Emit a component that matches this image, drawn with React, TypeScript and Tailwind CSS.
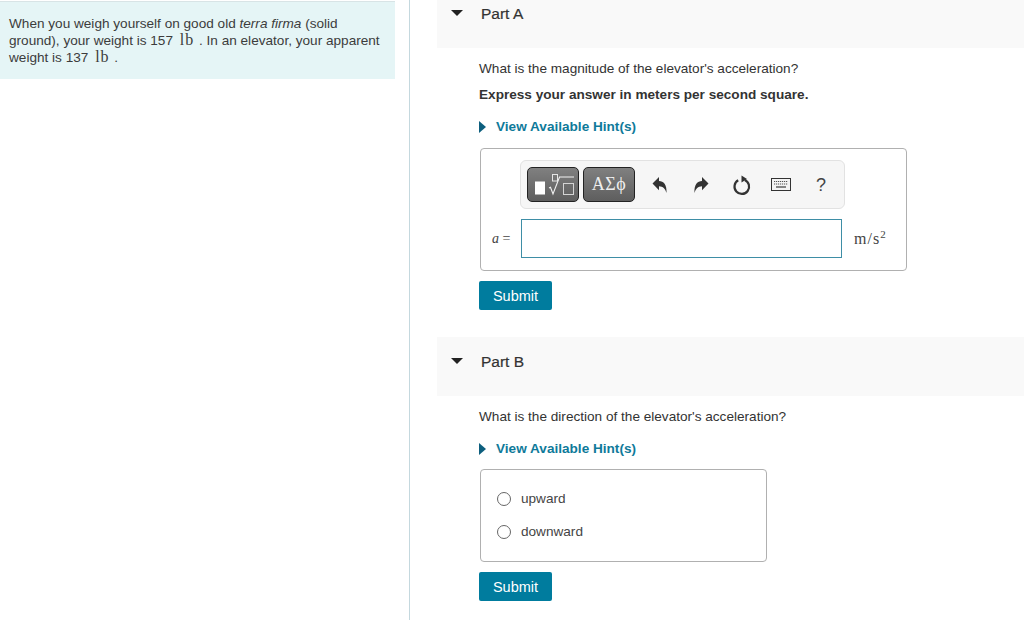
import React from 'react';

const sans = "font-['Liberation_Sans',Arial,sans-serif]";
const serif = "font-['Liberation_Serif','Times_New_Roman',serif]";

const PartHeader = ({ title, className }: { title: string; className: string }) => (
  <div className={`flex items-start bg-[#f9f9f9] pl-[14px] ${className}`}>
    <span className="mt-[10px] h-0 w-0 border-x-[6px] border-t-[6px] border-x-transparent border-t-[#222]" />
    <span className="ml-[18px] mt-[5px] text-[15.5px] leading-[18px] text-[#333] [-webkit-text-stroke:0.2px_#333]">{title}</span>
  </div>
);

const HintLink = () => (
  <div className="flex items-center">
    <span className="h-0 w-0 border-y-[6px] border-l-[7px] border-y-transparent border-l-[#0d5f7e]" />
    <span className="ml-[10px] text-[13.6px] font-bold leading-[18px] text-[#0f7a9a]">View Available Hint(s)</span>
  </div>
);

const SubmitButton = () => (
  <button type="button" className="block h-[29px] w-[73px] rounded-[2px] bg-[#007c9e] pt-px text-center text-[14.5px] leading-[28px] text-white">
    Submit
  </button>
);

const Radio = ({ label }: { label: string }) => (
  <label className="flex h-[33.5px] items-center">
    <span className="h-[14px] w-[14px] rounded-full border border-[#666] bg-white" />
    <span className="ml-[10px] text-[13.6px] leading-[18px] text-[#444]">{label}</span>
  </label>
);

const TemplateIcon = () => (
  <svg width="46" height="28" viewBox="0 0 46 28" fill="none">
    <rect x="5" y="10.5" width="10" height="13" fill="#fff" />
    <rect x="22.5" y="3.5" width="5" height="6.5" stroke="#e5e5e5" strokeWidth="1" />
    <path d="M19 17l1.5-.8L23 23l6.5-17H44" stroke="#f2f2f2" strokeWidth="1.1" />
    <rect x="33.5" y="12.5" width="10" height="11" stroke="#d4d4d4" strokeWidth="1" />
  </svg>
);

const UndoIcon = ({ flip }: { flip?: boolean }) => (
  <svg width="16" height="18" viewBox="0 0 16 18" className={flip ? '-scale-x-100' : ''}>
    <path d="M0.5 7.5L7 1v4c4.5.3 8 3.200 7.500 12C13.200 12.500 11 10.500 7 10.300V14.300z" fill="#333" />
  </svg>
);

const ResetIcon = () => (
  <svg width="20" height="22" viewBox="0 0 20 22" fill="none">
    <path d="M6.200 6.300A7.300 7.300 0 1 0 12.800 6" stroke="#333" strokeWidth="2.200" />
    <path d="M9.500 1.500L15 5L9.500 8.500z" fill="#333" />
  </svg>
);

const KeyboardIcon = () => (
  <svg width="20" height="13" viewBox="0 0 20 13" fill="none">
    <rect x="0.500" y="0.500" width="19" height="12" fill="#f4f4f4" stroke="#333" />
    <path d="M3 3.500h14M3 6h14" stroke="#555" strokeWidth="1.200" strokeDasharray="1.200 .8" />
    <path d="M5 9h10" stroke="#555" strokeWidth="1.400" />
  </svg>
);

const Toolbar = () => (
  <div className="ml-[39px] flex h-[49px] w-[325px] items-center rounded-[6px] border border-[#e2e2e2] bg-[#f6f6f6] pl-[6px]">
    <span className="flex h-[35px] w-[52px] items-center justify-center rounded-[5px] border border-[#222] bg-gradient-to-b from-[#808080] to-[#5e5e5e]">
      <TemplateIcon />
    </span>
    <span className={`ml-[4px] flex h-[35px] w-[52px] items-center justify-center rounded-[5px] border border-[#222] bg-gradient-to-b from-[#808080] to-[#5e5e5e] text-[18px] tracking-[0.5px] text-[#eee] ${serif}`}>
      ΑΣϕ
    </span>
    <span className="ml-[17px] flex w-[16px] justify-center"><UndoIcon /></span>
    <span className="ml-[25px] flex w-[16px] justify-center"><UndoIcon flip /></span>
    <span className="ml-[23px] flex w-[20px] justify-center"><ResetIcon /></span>
    <span className="ml-[19px] flex w-[20px] justify-center"><KeyboardIcon /></span>
    <span className="ml-[25px] text-[18px] leading-none text-[#444]">?</span>
  </div>
);

export default function App() {
  return (
    <div className={`flex h-[620px] w-[1024px] overflow-hidden bg-white text-[#333] ${sans}`}>
      <aside className="h-full w-[410px] shrink-0 border-r border-[#c4d8de]">
        <div className="mt-px h-[78px] w-[395px] border-t border-[#d8e4e6] bg-[#e5f5f6] pl-[9px] pt-[14px] text-[13.6px] leading-[16.75px] text-[#3c3c3c]">
          When you weigh yourself on good old <em>terra firma</em> (solid
          <br />
          ground), your weight is 157 <span className={`ml-[3px] mr-[1px] text-[16px] leading-[0] tracking-[1px] ${serif}`}>lb</span> . In an elevator, your apparent
          <br />
          weight is 137 <span className={`ml-[3px] mr-[1px] text-[16px] leading-[0] tracking-[1px] ${serif}`}>lb</span> .
        </div>
      </aside>

      <main className="ml-[27px] flex-1">
        <PartHeader title="Part A" className="h-[48px]" />
        <section className="pl-[42px]">
          <p className="mt-[12px] text-[13.6px] leading-[18px]">What is the magnitude of the elevator's acceleration?</p>
          <p className="mt-[8px] text-[13.6px] font-bold leading-[18px]">Express your answer in meters per second square.</p>
          <div className="mt-[14px]"><HintLink /></div>

          <div className="mt-[12px] ml-px h-[123px] w-[427px] rounded-[4px] border border-[#b0b0b0] pt-[11px]">
            <Toolbar />
            <div className="mt-[10px] flex items-center">
              <span className={`ml-[11px] w-[29px] text-[14px] text-[#444] ${serif}`}><i>a</i> =</span>
              <span className="h-[39px] w-[321px] border border-[#3e8ea6] bg-white" />
              <span className={`ml-[12px] text-[16px] leading-none tracking-[1px] text-[#444] ${serif}`}>m/s<sup className="text-[11px]">2</sup></span>
            </div>
          </div>

          <div className="mt-[10px]"><SubmitButton /></div>
        </section>

        <PartHeader title="Part B" className="mt-[27px] h-[59px] pt-[11px]" />
        <section className="pl-[42px]">
          <p className="mt-[12px] text-[13.6px] leading-[18px]">What is the direction of the elevator's acceleration?</p>
          <div className="mt-[14px]"><HintLink /></div>

          <div className="mt-[11px] ml-px h-[93px] w-[287px] rounded-[4px] border border-[#b0b0b0] pl-[16px] pt-[12px]">
            <Radio label="upward" />
            <Radio label="downward" />
          </div>

          <div className="mt-[10px]"><SubmitButton /></div>
        </section>
      </main>
    </div>
  );
}
